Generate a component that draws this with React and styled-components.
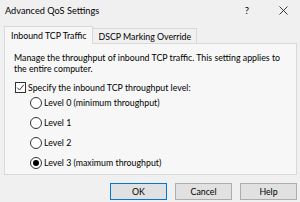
import React from "react";
import styled, { createGlobalStyle } from "styled-components";

const GlobalStyle = createGlobalStyle`
  html, body {
    margin: 0;
    padding: 0;
    background: #f0f0f0;
  }
  body {
    font-family: Lato, "Noto Sans", sans-serif;
    font-size: 8.8px;
    color: #000;
  }
`;

const levels = [
  "Level 0 (minimum throughput)",
  "Level 1",
  "Level 2",
  "Level 3 (maximum throughput)",
];

export default function App() {
  const [level, setLevel] = React.useState(3);
  const [tab, setTab] = React.useState(0);
  const [specify, setSpecify] = React.useState(true);

  return (
    <Window>
      <GlobalStyle />
      <TitleBar>
        <Title>Advanced QoS Settings</Title>
        <TitleButton width={38}>?</TitleButton>
        <TitleButton width={34}>
          <svg width="9" height="9" viewBox="0 0 9 9">
            <path d="M0.5 0.5 L8.5 8.5 M8.5 0.5 L0.5 8.5" stroke="#222" strokeWidth="0.9" />
          </svg>
        </TitleButton>
      </TitleBar>

      <Tabs>
        <Tab active={tab === 0} onClick={() => setTab(0)}>
          Inbound TCP Traffic
        </Tab>
        <Tab active={tab === 1} onClick={() => setTab(1)}>
          DSCP Marking Override
        </Tab>
      </Tabs>

      <Panel>
        <Description>
          Manage the throughput of inbound TCP traffic. This setting applies to
          the entire computer.
        </Description>
        <CheckRow onClick={() => setSpecify(!specify)}>
          <CheckBox>
            {specify && (
              <svg width="9" height="9" viewBox="0 0 9 9">
                <path d="M1.2 4.6 L3.5 7 L7.8 1.8" fill="none" stroke="#333" strokeWidth="1" />
              </svg>
            )}
          </CheckBox>
          Specify the inbound TCP throughput level:
        </CheckRow>
        <RadioList>
          {levels.map((label, i) => (
            <RadioRow key={label} onClick={() => setLevel(i)}>
              <Radio>{level === i && <RadioDot />}</Radio>
              {label}
            </RadioRow>
          ))}
        </RadioList>
      </Panel>

      <Footer>
        <Button primary>OK</Button>
        <Button>Cancel</Button>
        <Button>Help</Button>
      </Footer>
    </Window>
  );
}

const Window = styled.div`
  width: 300px;
  height: 202px;
  display: flex;
  flex-direction: column;
  background: #f0f0f0;
  box-sizing: border-box;
  overflow: hidden;
`;

const TitleBar = styled.div`
  height: 20px;
  display: flex;
  align-items: center;
  padding: 0 0 0 5px;
  font-size: 9.2px;
`;

const Title = styled.div`
  flex: 1;
  color: #000;
`;

const TitleButton = styled.div`
  width: ${({ width }) => width}px;
  height: 20px;
  display: flex;
  align-items: center;
  justify-content: center;
  font-size: 9.5px;
`;

const Tabs = styled.div`
  display: flex;
  align-items: flex-end;
  height: 23px;
  padding: 0 0 0 4px;
`;

const Tab = styled.div`
  height: ${({ active }) => (active ? "17px" : "14px")};
  padding: 0 ${({ active }) => (active ? "6px" : "5px")};
  display: flex;
  align-items: center;
  border: 1px solid #d9d9d9;
  border-bottom: none;
  background: ${({ active }) => (active ? "#f7f7f7" : "#f0f0f0")};
  margin-bottom: ${({ active }) => (active ? "-1px" : "0")};
  position: relative;
  z-index: ${({ active }) => (active ? 1 : 0)};
  & + & {
    border-left: none;
  }
  cursor: default;
`;

const Panel = styled.div`
  margin: 0 3px 0 4px;
  height: 132px;
  border: 1px solid #d9d9d9;
  background: #f7f7f7;
  padding: 8px 10px 0 9px;
  box-sizing: border-box;
`;

const Description = styled.div`
  line-height: 11px;
  margin-bottom: 7px;
`;

const CheckRow = styled.div`
  display: flex;
  align-items: center;
  gap: 2px;
  margin-left: 1px;
  height: 13px;
`;

const CheckBox = styled.div`
  width: 11px;
  height: 11px;
  border: 1px solid #333;
  background: #fff;
  display: flex;
  align-items: center;
  justify-content: center;
  box-sizing: border-box;
`;

const RadioList = styled.div`
  display: flex;
  flex-direction: column;
  gap: 7px;
  margin: 2px 0 0 16px;
`;

const RadioRow = styled.div`
  display: flex;
  align-items: center;
  gap: 2px;
  height: 13px;
`;

const Radio = styled.div`
  width: 12px;
  height: 12px;
  border: 1px solid #333;
  border-radius: 50%;
  background: #fff;
  box-sizing: border-box;
  display: flex;
  align-items: center;
  justify-content: center;
`;

const RadioDot = styled.div`
  width: 6px;
  height: 6px;
  border-radius: 50%;
  background: #000;
`;

const Footer = styled.div`
  display: flex;
  justify-content: flex-end;
  gap: 8px;
  padding: 8px 3px 0 0;
`;

const Button = styled.div`
  width: 57px;
  height: 17px;
  box-sizing: border-box;
  border: 1px solid ${({ primary }) => (primary ? "#0078d7" : "#adadad")};
  background: #e1e1e1;
  display: flex;
  align-items: center;
  justify-content: center;
  cursor: default;
`;
